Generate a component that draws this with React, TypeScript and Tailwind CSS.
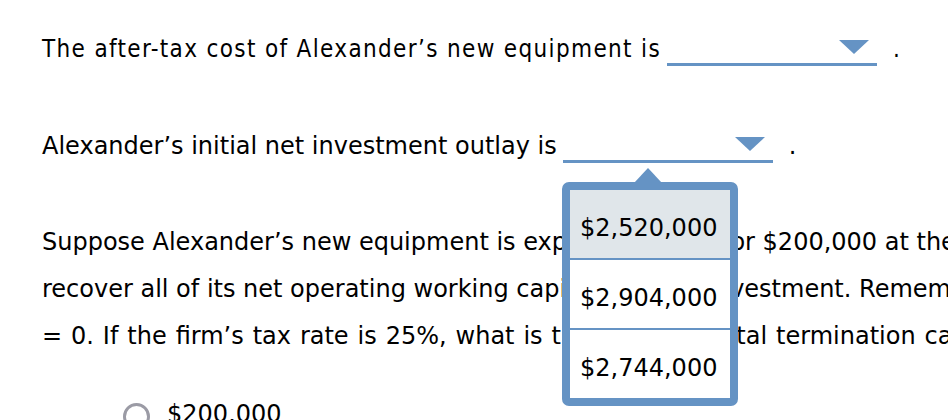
import type { ReactNode } from 'react'

const options = ['$2,520,000', '$2,904,000', '$2,744,000']

function Caret() {
  return (
    <svg width="30" height="14" viewBox="0 0 30 14" className="block ml-auto">
      <path d="M0 0 L30 0 L15 14 Z" fill="#6593c4" />
    </svg>
  )
}

// inline answer blank with the little down arrow, underlined
function Blank() {
  return (
    <span className="inline-block overflow-hidden w-[210px] h-[30px] pt-[4px] pr-[8px] border-b-[3px] border-[#6593c4] align-[-9px] ml-[6px]">
      <Caret />
    </span>
  )
}

function Line({ children, className = '' }: { children: ReactNode; className?: string }) {
  return <div className={'whitespace-nowrap leading-[47px] ' + className}>{children}</div>
}

export default function App() {
  return (
    <div className="relative w-[948px] h-[420px] overflow-hidden bg-white text-black text-[24px] font-['DejaVu_Sans',Verdana,sans-serif]">
      <div className="pl-[42px] pt-[26px]">
        <Line className="font-stretch-condensed tracking-[1.35px]">
          The after-tax cost of Alexander’s new equipment is
          <Blank />
          <span className="ml-[16px]">.</span>
        </Line>

        <Line className="mt-[50px]">
          Alexander’s initial net investment outlay is
          <Blank />
          <span className="ml-[16px]">.</span>
        </Line>

        <div className="mt-[49px]">
          <Line>Suppose Alexander’s new equipment is expected to sell for $200,000 at the end of its four-year useful life,</Line>
          <Line>recover all of its net operating working capital (NOWC) investment. Remember that under the new tax law,</Line>
          <Line className="[word-spacing:1.3px]">= 0. If the firm’s tax rate is 25%, what is the project’s total termination cash flow?</Line>
        </div>

        <div className="flex items-start gap-[17px] pl-[81px] mt-[43px]">
          <span className="w-[27px] h-[27px] rounded-full border-[3px] border-[#9b9ba5] shrink-0" />
          <span className="leading-[30px] -mt-[4px]">$200,000</span>
        </div>
      </div>

      {/* open dropdown list under the second blank */}
      <div className="absolute left-[562px] top-[168px] w-[176px]">
        <div className="pl-[72px] -mb-px">
          <svg width="28" height="15" viewBox="0 0 28 15" className="block">
            <path d="M0 15 L14 0 L28 15 Z" fill="#6593c4" />
          </svg>
        </div>
        <div className="border-[8px] border-[#6593c4] rounded-[7px] bg-white">
          {options.map((o, i) => (
            <div
              key={o}
              className={
                'flex items-center pl-[10px] pt-[7px] ' +
                (i === 0 ? 'h-[68px] bg-[#e0e6ea]' : 'h-[70px] border-t-2 border-[#6593c4]')
              }
            >
              {o}
            </div>
          ))}
        </div>
      </div>
    </div>
  )
}
